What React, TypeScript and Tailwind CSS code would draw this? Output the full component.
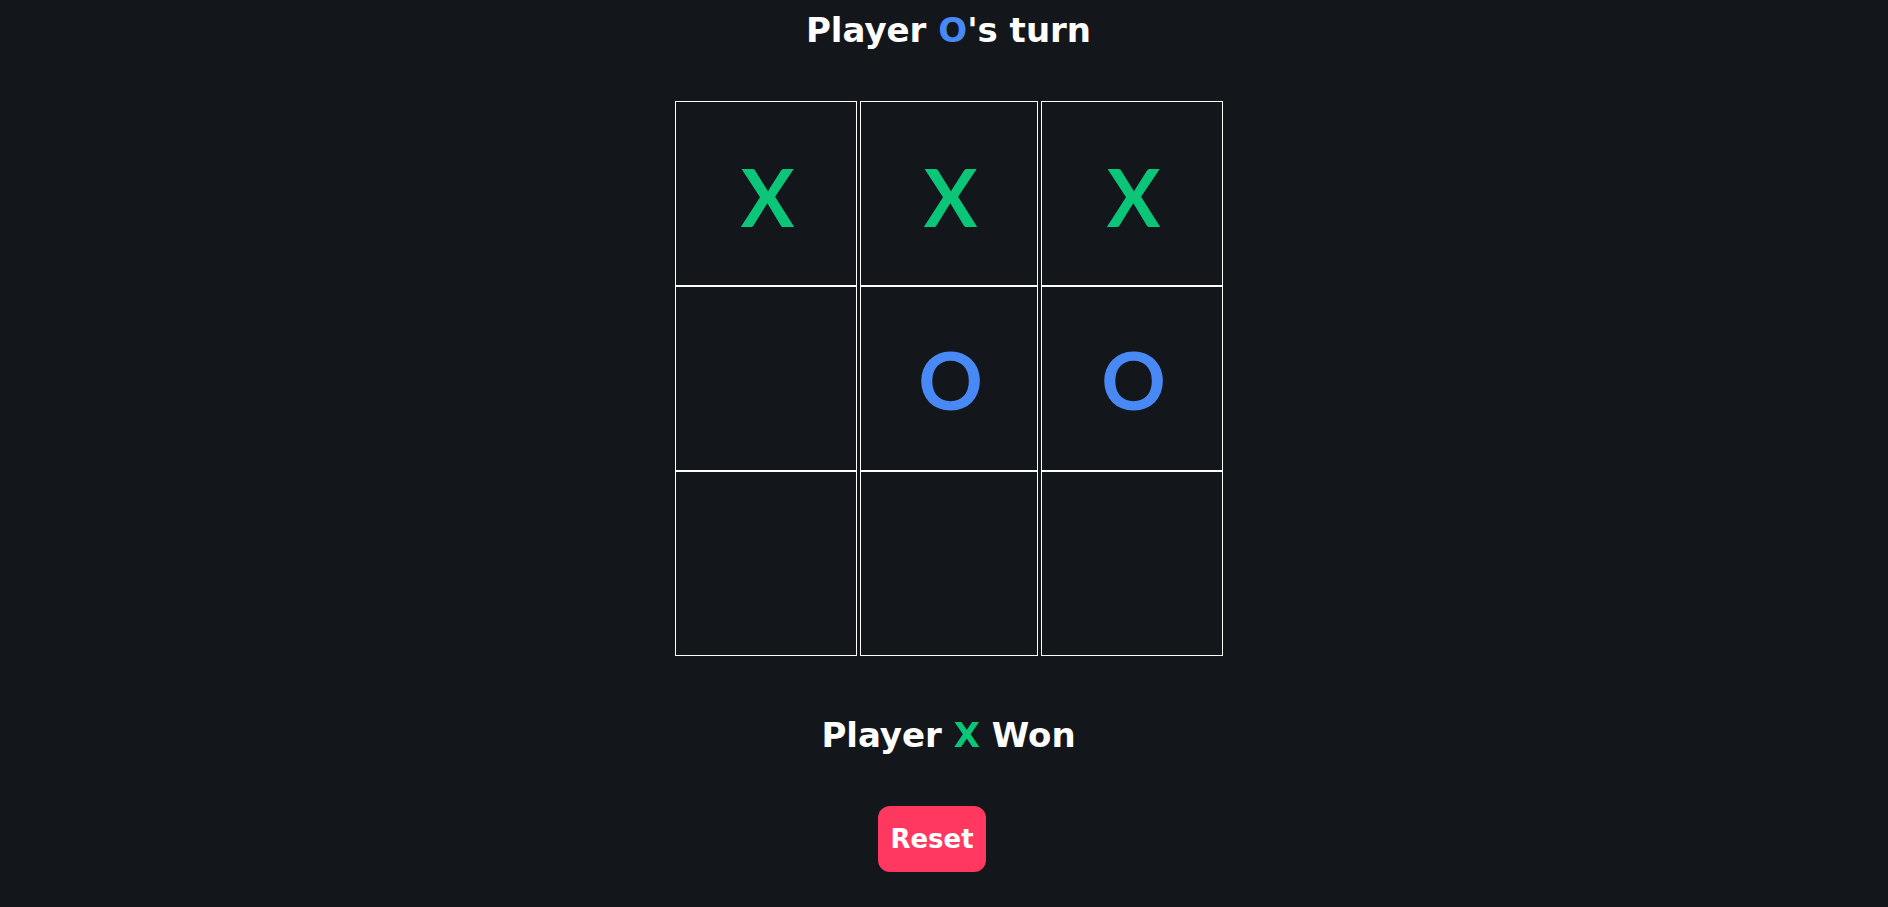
import React from 'react';

type Mark = 'X' | 'O' | null;

const board: Mark[][] = [
  ['X', 'X', 'X'],
  [null, 'O', 'O'],
  [null, null, null],
];

const colWidths = ['w-[182px]', 'w-[178px]', 'w-[182px]'];

function Cell({ mark, col }: { mark: Mark; col: number }) {
  return (
    <div
      className={[
        'h-[185px] border border-white flex items-center justify-center',
        colWidths[col],
      ].join(' ')}
    >
      {mark && (
        <span
          className={[
            'text-[80px] leading-none font-bold select-none pl-[4px]',
            mark === 'X' ? 'text-[#0bc578] pt-[4px]' : 'text-[#4889f5]',
          ].join(' ')}
          style={{ fontFamily: 'Lato, "Noto Sans", sans-serif' }}
        >
          {mark}
        </span>
      )}
    </div>
  );
}

export default function App() {
  return (
    <div
      className="min-h-screen bg-[#13171b] text-white flex flex-col items-center pl-[9px]"
      style={{ fontFamily: '"DejaVu Sans", Verdana, sans-serif' }}
    >
      {/* Turn indicator */}
      <h1 className="text-[34px] leading-[54px] font-bold mt-[3px]">
        Player <span className="text-[#4889f5]">O</span>'s turn
      </h1>

      {/* Board */}
      <div className="mt-[44px] flex flex-col">
        {board.map((row, r) => (
          <div key={r} className="flex gap-[3px]">
            {row.map((m, c) => (
              <Cell key={c} mark={m} col={c} />
            ))}
          </div>
        ))}
      </div>

      {/* Result */}
      <div className="mt-[52px] text-[34px] leading-[54px] font-bold">
        Player <span className="text-[#0bc578]">X</span> Won
      </div>

      <button className="mt-[44px] mr-[33px] h-[66px] w-[108px] rounded-[12px] bg-[#ff3860] text-white text-[26px] font-bold">
        Reset
      </button>
    </div>
  );
}
